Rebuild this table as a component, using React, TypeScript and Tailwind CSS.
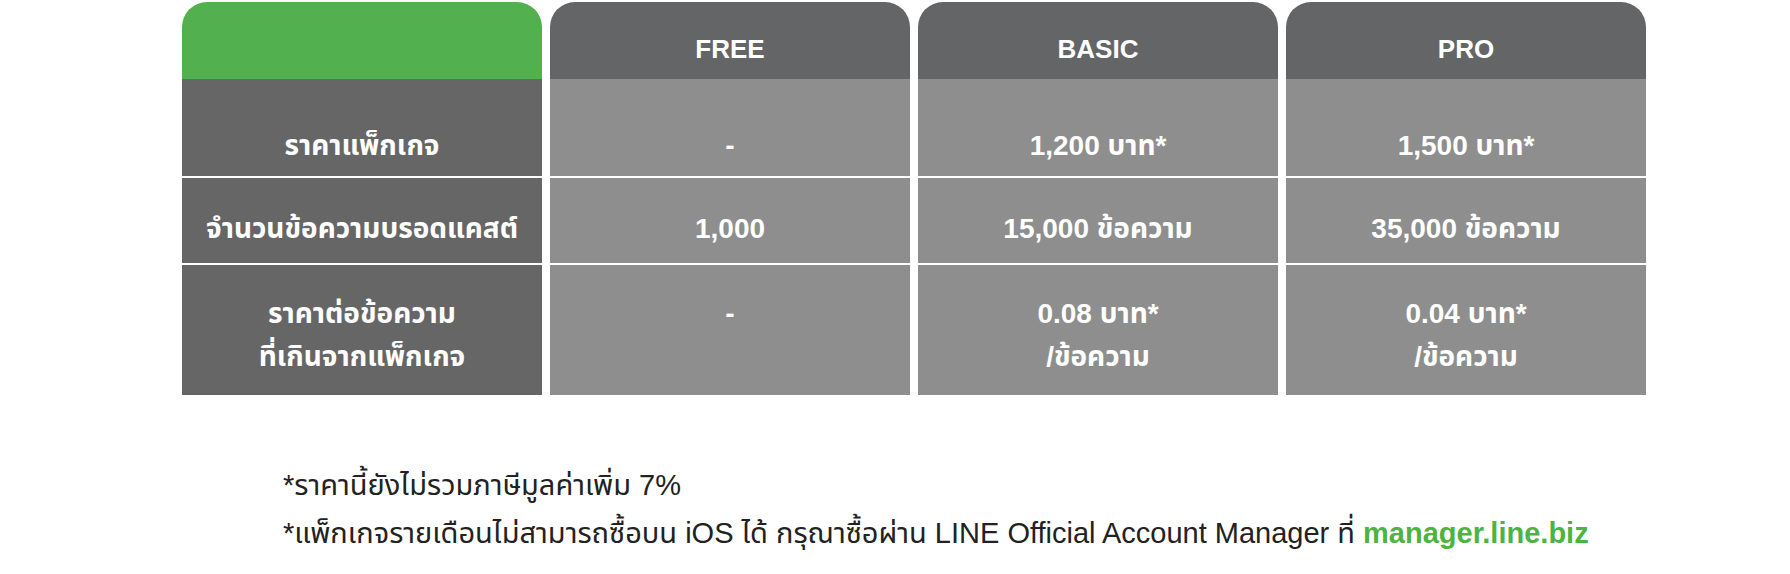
import React from "react";

const font = { fontFamily: '"Liberation Sans", "Noto Sans Thai", "Noto Sans", Arial, sans-serif' };

const cols = ["FREE", "BASIC", "PRO"];

type Row = { label: string[]; values: string[][]; h: string; pt: string; lh: string };

const rows: Row[] = [
  { label: ["ราคาแพ็กเกจ"], values: [["-"], ["1,200 บาท*"], ["1,500 บาท*"]], h: "h-[97px]", pt: "pt-[51px]", lh: "leading-[32px]" },
  { label: ["จำนวนข้อความบรอดแคสต์"], values: [["1,000"], ["15,000 ข้อความ"], ["35,000 ข้อความ"]], h: "h-[85px]", pt: "pt-[35px]", lh: "leading-[32px]" },
  {
    label: ["ราคาต่อข้อความ", "ที่เกินจากแพ็กเกจ"],
    values: [["-"], ["0.08 บาท*", "/ข้อความ"], ["0.04 บาท*", "/ข้อความ"]],
    h: "h-[130px]",
    pt: "pt-[27px]",
    lh: "leading-[43px]",
  },
];

export default function App() {
  return (
    <div className="w-[1790px] h-[574px] bg-white overflow-hidden" style={font}>
      <div className="pl-[182px] pt-[2px]">
        {/* header */}
        <div className="grid grid-cols-[360px_360px_360px_360px] gap-x-2">
          <div className="h-[77px] rounded-t-[25px] bg-[#52b04e]" />
          {cols.map((c) => (
            <div
              key={c}
              className="h-[77px] rounded-t-[25px] bg-[#646567] pt-[32px] text-center text-[26px] leading-[30px] font-bold text-white"
            >
              {c}
            </div>
          ))}
        </div>
        {/* body */}
        <div className="flex flex-col gap-y-[2px]">
          {rows.map((r, i) => (
            <div key={i} className="grid grid-cols-[360px_360px_360px_360px] gap-x-2">
              <div className={`${r.h} ${r.pt} ${r.lh} bg-[#666666] text-center text-[28px] font-bold text-white`}>
                {r.label.map((l) => (
                  <div key={l}>{l}</div>
                ))}
              </div>
              {r.values.map((v, j) => (
                <div key={j} className={`${r.h} ${r.pt} ${r.lh} bg-[#8e8e8e] text-center text-[28px] font-bold text-white`}>
                  {v.map((l) => (
                    <div key={l}>{l}</div>
                  ))}
                </div>
              ))}
            </div>
          ))}
        </div>
      </div>
      {/* notes */}
      <div className="pl-[283px] mt-[66px] text-[29px] leading-[48px] text-[#222222]">
        <div>*ราคานี้ยังไม่รวมภาษีมูลค่าเพิ่ม 7%</div>
        <div>
          *แพ็กเกจรายเดือนไม่สามารถซื้อบน iOS ได้ กรุณาซื้อผ่าน LINE Official Account Manager ที่{" "}
          <span className="font-bold text-[#4cb43f]">manager.line.biz</span>
        </div>
      </div>
    </div>
  );
}
